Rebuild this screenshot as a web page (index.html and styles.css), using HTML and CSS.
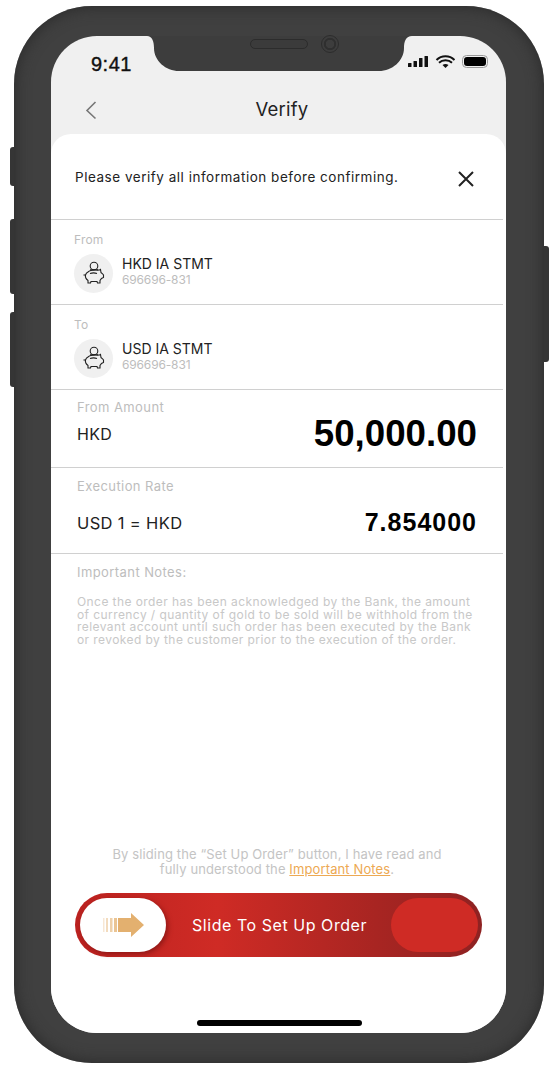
FILE: index.html
```html
<!DOCTYPE html>
<html lang="en">
<head>
<meta charset="utf-8">
<title>Verify</title>
<link rel="stylesheet" href="styles.css">
</head>
<body>
<div class="phone">
  <span class="side side-a"></span>
  <span class="side side-b"></span>
  <span class="side side-c"></span>
  <span class="side side-r"></span>
  <div class="screen">
    <svg class="notch" width="265" height="35" viewBox="0 0 265 35"><path d="M0 0H265C259 0 257 5 257 12C257 25 245 35 232 35H32C19 35 7 25 7 12C7 5 5 0 0 0Z" fill="#3d3d3d"/></svg>
    <header class="top">
      <div class="status">
        <span class="time">9:41</span>
        <svg class="status-icons" width="80" height="14" viewBox="0 0 80 14">
          <rect x="0" y="8" width="3.500" height="4" rx=".5" fill="#111"/><rect x="5.500" y="6" width="3.500" height="6" rx=".5" fill="#111"/><rect x="11" y="3" width="3.500" height="9" rx=".5" fill="#111"/><rect x="16.500" y="1" width="3.500" height="11" rx=".5" fill="#111"/>
          <path d="M28.500 5C33.500 0 41.500 0 46.500 5M31 7.800C34.500 4.500 40.500 4.500 44 7.800" fill="none" stroke="#111" stroke-width="2"/><path d="M34.500 10C36.500 8.600 38.500 8.600 40.500 10L37.500 13Z" fill="#111"/>
          <rect x="54.500" y=".5" width="25" height="12" rx="4" fill="none" stroke="#9a9a9a" stroke-width="1"/><rect x="56" y="2" width="22" height="9" rx="3" fill="#000"/>
        </svg>
      </div>
      <div class="nav">
        <svg class="back" width="12" height="20" viewBox="0 0 12 20"><path d="M10.500 2L2 10.500L10.500 18.500" fill="none" stroke="#777" stroke-width="1.600"/></svg>
        <h1 class="title">Verify</h1>
      </div>
    </header>
    <main class="card">
      <div class="intro">
        <p class="intro-text">Please verify all information before confirming.</p>
        <svg class="close" width="18" height="18" viewBox="0 0 18 18"><path d="M2 2L16 16M16 2L2 16" stroke="#222" stroke-width="2"/></svg>
      </div>
      <section class="row account">
        <div class="label">From</div>
        <div class="acct-line">
          <span class="avatar"><svg width="26" height="26" viewBox="0 0 26 26"><g fill="none" stroke="#222" stroke-width="1.100"><circle cx="13" cy="5" r="3.800"/><path d="M9 8.800H17"/><path d="M7 11C8.500 9.500 11 9 14 9C16 9 18 9.500 19.500 8.500L20 11.500C21 12.500 22 13 22.500 14V16.500L20.500 17.500L19 19.500V22H16.500L16 20.500H10L9.500 22H7V19.500C5 18 4 16.500 4.500 14C5 12.500 6 11.500 7 11Z"/><path d="M4.500 14H2.500"/><path d="M9 12.500C11 11.800 14 11.800 16 12.500"/></g></svg></span>
          <div class="acct-text">
            <div class="acct-name">HKD IA STMT</div>
            <div class="acct-no">696696-831</div>
          </div>
        </div>
      </section>
      <section class="row account">
        <div class="label">To</div>
        <div class="acct-line">
          <span class="avatar"><svg width="26" height="26" viewBox="0 0 26 26"><g fill="none" stroke="#222" stroke-width="1.100"><circle cx="13" cy="5" r="3.800"/><path d="M9 8.800H17"/><path d="M7 11C8.500 9.500 11 9 14 9C16 9 18 9.500 19.500 8.500L20 11.500C21 12.500 22 13 22.500 14V16.500L20.500 17.500L19 19.500V22H16.500L16 20.500H10L9.500 22H7V19.500C5 18 4 16.500 4.500 14C5 12.500 6 11.500 7 11Z"/><path d="M4.500 14H2.500"/><path d="M9 12.500C11 11.800 14 11.800 16 12.500"/></g></svg></span>
          <div class="acct-text">
            <div class="acct-name">USD IA STMT</div>
            <div class="acct-no">696696-831</div>
          </div>
        </div>
      </section>
      <section class="row amount">
        <div class="label label-wide">From Amount</div>
        <div class="value-line">
          <span class="ccy">HKD</span>
          <span class="big">50,000.00</span>
        </div>
      </section>
      <section class="row rate">
        <div class="label label-wide">Execution Rate</div>
        <div class="value-line">
          <span class="ccy ccy-rate">USD 1 = HKD</span>
          <span class="mid">7.854000</span>
        </div>
      </section>
      <section class="notes">
        <div class="label label-wide">Important Notes:</div>
        <p class="notes-text">Once the order has been acknowledged by the Bank, the amount<br>of currency / quantity of gold to be sold will be withhold from the<br>relevant account until such order has been executed by the Bank<br>or revoked by the customer prior to the execution of the order.</p>
      </section>
      <div class="bottom">
        <p class="terms">By sliding the “Set Up Order” button, I have read and<br>fully understood the <a class="link" href="#">Important Notes</a>.</p>
        <div class="slider">
          <span class="knob">
            <svg class="knob-arrow" width="42" height="26" viewBox="0 0 42 26"><g fill="#e3b06f"><rect x="0" y="6" width="1.500" height="14" opacity=".3"/><rect x="3" y="6" width="2" height="14" opacity=".45"/><rect x="7" y="6" width="2.500" height="14" opacity=".6"/><rect x="11" y="6" width="3" height="14" opacity=".75"/><path d="M15 6H28V1L41 13L28 25V20H15Z"/></g></svg>
          </span>
          <span class="slide-text">Slide To Set Up Order</span>
          <span class="target"></span>
        </div>
      </div>
      <span class="home"></span>
    </main>
  </div>
  <span class="speaker"></span>
  <span class="camera"></span>
</div>
</body>
</html>
```
FILE: styles.css
```css
* { box-sizing: border-box; }
html, body { margin: 0; padding: 0; background: #fff; }
body { width: 558px; height: 1070px; overflow: hidden; font-family: Inter, "Liberation Sans", sans-serif; }
.phone {
  position: relative;
  width: 530px;
  height: 1057px;
  margin: 6px 0 0 14px;
  padding: 30px 38px 30px 37px;
  border-radius: 78px;
  background: #404040;
  box-shadow: inset 0 0 16px #282828;
}
.side { position: absolute; background: #353535; }
.side-a { left: -4px; top: 141px; width: 4px; height: 39px; border-radius: 3px 0 0 3px; }
.side-b { left: -4px; top: 213px; width: 4px; height: 75px; border-radius: 3px 0 0 3px; }
.side-c { left: -4px; top: 306px; width: 4px; height: 75px; border-radius: 3px 0 0 3px; }
.side-r { right: -5px; top: 240px; width: 5px; height: 116px; border-radius: 0 3px 3px 0; }
.screen {
  position: relative;
  display: flex;
  flex-direction: column;
  width: 455px;
  height: 997px;
  border-radius: 46px;
  overflow: hidden;
  background: #f0f0f0;
}
.notch { position: absolute; left: 96px; top: 0; }
.speaker { position: absolute; left: 236px; top: 33px; width: 58px; height: 10px; border-radius: 5px; border: 1px solid #2c2c2c; background: #3b3b3b; }
.camera { position: absolute; left: 307px; top: 29px; width: 18px; height: 18px; border-radius: 50%; border: 1.500px solid #2c2c2c; background: radial-gradient(circle, #3d3d3d 35%, #2f2f2f 40%, #2f2f2f 52%, #3d3d3d 58%); }
.top { height: 98px; flex: none; }
.status { display: flex; justify-content: space-between; align-items: center; height: 54px; padding: 0 18px 0 40px; }
.time { font-family: "Liberation Sans", sans-serif; font-size: 20px; font-weight: 400; color: #111; -webkit-text-stroke: .4px #111; padding-top: 2px; letter-spacing: .5px; }
.status-icons { margin-top: -3px; }
.nav { position: relative; display: flex; justify-content: center; align-items: center; height: 38px; padding-left: 7px; }
.back { position: absolute; left: 34px; top: 10px; }
.title { margin: 0; font-size: 18.500px; letter-spacing: .2px; font-weight: 400; color: #222; }
.card { position: relative; flex: 1; display: flex; flex-direction: column; background: #fff; border-radius: 20px 20px 0 0; }
.intro { display: flex; align-items: center; justify-content: space-between; height: 85px; padding: 4px 31px 0 24px; }
.intro-text { margin: 0 0 4px; font-size: 13.500px; letter-spacing: .52px; color: #222; }
.row { margin-right: 3px; border-top: 1px solid #d0d0d0; }
.account { height: 85px; padding: 12px 0 0 23px; }
.amount { height: 78px; padding: 10px 26px 0 26px; }
.rate { height: 86px; padding: 11px 26px 0 26px; }
.label { font-size: 12px; line-height: 15px; color: #bdbdbd; letter-spacing: .2px; }
.label-wide { font-size: 13px; letter-spacing: .42px; }
.acct-line { display: flex; align-items: center; gap: 9px; margin-top: 7px; }
.acct-text { margin-top: -6px; }
.avatar { display: flex; align-items: center; justify-content: center; width: 39px; height: 39px; border-radius: 50%; background: #f0f0f0; }
.acct-name { font-size: 14px; line-height: 18px; color: #222; }
.acct-no { font-size: 12px; line-height: 14px; color: #bdbdbd; letter-spacing: -.15px; }
.value-line { display: flex; justify-content: space-between; align-items: center; }
.amount .value-line { margin-top: -2px; }
.rate .value-line { margin-top: 13px; }
.ccy { font-size: 16px; letter-spacing: .3px; color: #222; }
.ccy-rate { font-size: 16.500px; letter-spacing: .35px; margin-top: 1px; }
.big { font-family: "Liberation Sans", sans-serif; font-size: 36.700px; line-height: 42px; font-weight: 700; color: #000; }
.mid { font-family: "Liberation Sans", sans-serif; font-size: 25px; line-height: 30px; font-weight: 700; color: #000; letter-spacing: 1px; }
.notes { margin-right: 3px; border-top: 1px solid #d0d0d0; padding: 11px 26px 0 26px; }
.notes-text { margin: 16px 0 0; font-size: 12px; letter-spacing: .42px; line-height: 12.700px; color: #c8c8c8; white-space: nowrap; }
.bottom { position: absolute; left: 24px; top: 713px; width: 407px; }
.terms { margin: 0 3px 0 0; font-size: 13px; letter-spacing: .12px; line-height: 15px; text-align: center; color: #c4c4c4; }
.link { color: #eda953; text-decoration: underline; }
.slider {
  display: flex;
  align-items: center;
  justify-content: space-between;
  height: 64px;
  margin-top: 16px;
  padding: 0 4px 0 5px;
  border-radius: 32px;
  background: linear-gradient(90deg, #bb2220 0%, #cf2b25 35%, #a82522 74%, #8e2222 100%);
}
.knob { display: flex; align-items: center; justify-content: center; width: 86px; height: 54px; border-radius: 27px; background: #fff; box-shadow: 2px 2px 5px rgba(90,10,10,.5); }
.knob-arrow { margin-left: 2px; }
.slide-text { font-size: 16px; letter-spacing: .55px; color: #fff; margin-left: 2px; }
.target { width: 87px; height: 54px; border-radius: 27px; background: #cf2b25; }
.home { position: absolute; left: 146px; top: 886px; width: 165px; height: 6px; border-radius: 3px; background: #000; }
```
